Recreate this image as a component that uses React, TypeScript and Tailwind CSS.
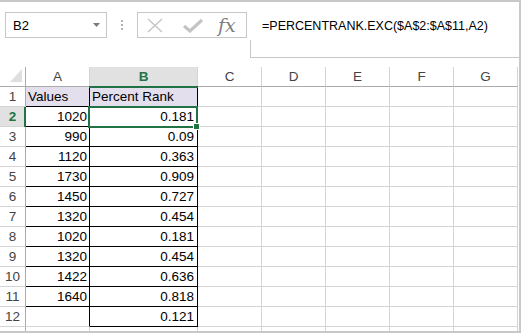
import React from "react";

const data: [string, string][] = [
  ["Values", "Percent Rank"],
  ["1020", "0.181"],
  ["990", "0.09"],
  ["1120", "0.363"],
  ["1730", "0.909"],
  ["1450", "0.727"],
  ["1320", "0.454"],
  ["1020", "0.181"],
  ["1320", "0.454"],
  ["1422", "0.636"],
  ["1640", "0.818"],
  ["", "0.121"],
  ["", ""],
];

const cols = ["C", "D", "E", "F", "G"];

export default function App() {
  return (
    <div className="w-[521px] h-[333px] bg-white overflow-hidden border-t-2 border-r-2 border-b-2 border-[#c8c8c8] font-['Liberation_Sans',Arial,sans-serif] text-black">
      {/* formula bar */}
      <div className="flex h-[56px] pt-[10px] items-start">
        <div className="ml-[5px] w-[102px] h-[26px] border border-[#c6c6c6] flex items-center justify-between pl-[7px] pr-[6px]">
          <span className="text-[13px] leading-[15px]">B2</span>
          <svg width="7" height="4" viewBox="0 0 7 4">
            <polygon points="0,0 7,0 3.5,4" fill="#7a7a7a" />
          </svg>
        </div>
        <div className="w-[30px] h-[26px] flex flex-col items-center justify-center gap-[2px]">
          <div className="w-[2px] h-[2px] bg-[#b4b4b4]" />
          <div className="w-[2px] h-[2px] bg-[#b4b4b4]" />
          <div className="w-[2px] h-[2px] bg-[#b4b4b4]" />
        </div>
        <div className="w-[110px] h-[26px] border border-[#c6c6c6] flex items-center pl-[9px]">
          <svg width="16" height="15" viewBox="0 0 16 15">
            <path d="M1 1 L15 14 M15 1 L1 14" stroke="#c4c4c4" strokeWidth="1.4" fill="none" />
          </svg>
          <svg width="20" height="15" viewBox="0 0 20 15" className="ml-[20px]">
            <path d="M1 8 L7 13 L19 2" stroke="#c4c4c4" strokeWidth="3.2" fill="none" />
          </svg>
          <span className="ml-[15px] font-['DejaVu_Serif',serif] italic text-[19px] leading-[20px] text-[#7f7f7f]">fx</span>
        </div>
        <div className="ml-[3px] flex-1 h-[46px] border-b border-[#c6c6c6] flex flex-col">
          <div className="h-[28px] pl-[12px] pt-[7px] text-[12.5px] leading-[15px]">=PERCENTRANK.EXC($A$2:$A$11,A2)</div>
          <div className="flex-1 border-l border-[#c6c6c6]" />
        </div>
      </div>
      <div className="h-[9px]" />
      {/* sheet */}
      <div className="relative">
        <div className="grid grid-cols-[26px_64px_108px_64px_64px_64px_64px_64px] text-[13.5px]">
          {/* header row */}
          <div className="h-[20px] border-r border-b border-[#ababab] flex items-end justify-end pr-[3px] pb-[4px]">
            <svg width="12" height="13" viewBox="0 0 12 13">
              <polygon points="12,0 12,13 0,13" fill="#dfdfdf" />
            </svg>
          </div>
          <div className="h-[20px] border-r border-r-[#d4d4d4] border-b border-b-[#ababab] text-center leading-[19px] text-[#444]">A</div>
          <div className="h-[20px] border-r border-r-[#d4d4d4] border-b border-b-[#ababab] bg-[#e1e1e1] text-center leading-[19px] font-bold text-[#217346]">B</div>
          {cols.map((c) => (
            <div key={c} className="h-[20px] border-r border-r-[#d4d4d4] border-b border-b-[#ababab] text-center leading-[19px] text-[#444]">
              {c}
            </div>
          ))}
          {data.map(([a, b], i) => {
            const r = i + 1;
            const headerCls =
              r === 2
                ? "h-[20px] border-r border-r-[#ababab] border-b border-b-[#d4d4d4] bg-[#e1e1e1] text-center leading-[19px] font-bold text-[#217346]"
                : "h-[20px] border-r border-r-[#ababab] border-b border-b-[#d4d4d4] text-center leading-[19px] text-[#444]";
            let aCls: string;
            if (r === 1) aCls = "h-[20px] border-r border-b border-black bg-[#e4dfec] pl-[2px] leading-[19px] whitespace-nowrap";
            else if (r <= 11) aCls = "h-[20px] border-r border-b border-black text-right pr-[2px] leading-[19px]";
            else if (r === 12) aCls = "h-[20px] border-r border-r-black border-b border-b-[#d4d4d4]";
            else aCls = "h-[20px] border-r border-b border-[#d4d4d4]";
            let bCls: string;
            if (r === 1) bCls = "h-[20px] border-r border-b border-black bg-[#e4dfec] pl-[2px] leading-[19px] whitespace-nowrap";
            else if (r <= 12) bCls = "h-[20px] border-r border-b border-black text-right pr-[3px] leading-[19px]";
            else bCls = "h-[20px] border-r border-b border-[#d4d4d4]";
            return (
              <React.Fragment key={r}>
                <div className={headerCls}>{r <= 12 ? r : ""}</div>
                <div className={aCls}>{a}</div>
                <div className={bCls}>{b}</div>
                {cols.map((c) => (
                  <div key={c} className="h-[20px] border-r border-b border-[#d4d4d4]" />
                ))}
              </React.Fragment>
            );
          })}
        </div>
        {/* selection overlays */}
        <div className="absolute left-[89px] top-[19px] w-[109px] h-[2px] bg-[#217346]" />
        <div className="absolute left-[24px] top-[40px] w-[2px] h-[20px] bg-[#217346]" />
        <div className="absolute left-[88px] top-[39px] w-[110px] h-[22px] border-2 border-[#217346]" />
        <div className="absolute left-[193px] top-[56px] w-[7px] h-[7px] bg-[#217346] border border-white" />
      </div>
    </div>
  );
}
